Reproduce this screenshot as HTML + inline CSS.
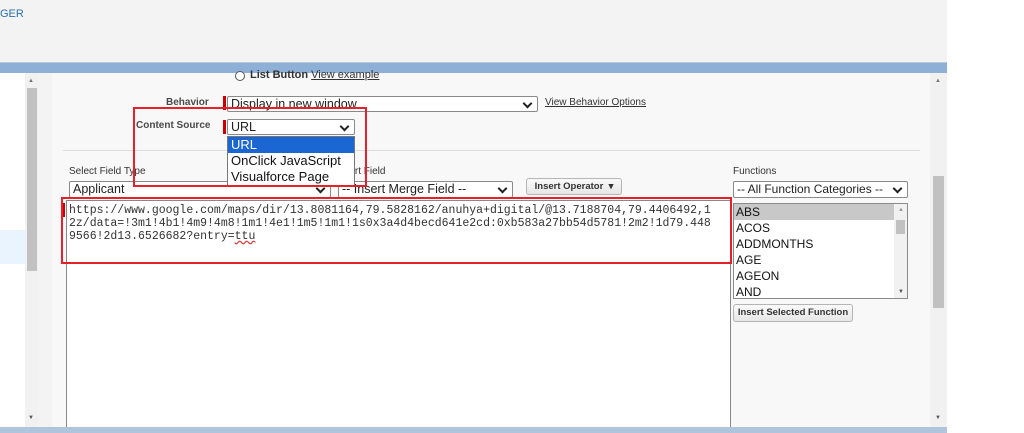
<!DOCTYPE html>
<html><head><style>
*{margin:0;padding:0;box-sizing:border-box}
body{width:1024px;height:433px;overflow:hidden;background:#fff;font-family:"Liberation Sans",Arial,sans-serif;position:relative}
.a{position:absolute}
.sel{position:absolute;background:#fff;border:1px solid #8a8a8a;border-radius:2px;font-size:12.5px;color:#222;padding-left:3px;line-height:15px;white-space:nowrap;overflow:hidden}
.sel:after{content:"";position:absolute;right:6px;top:3px;width:5px;height:5px;border-right:2px solid #222;border-bottom:2px solid #222;transform:rotate(45deg);background:#fff}
.lbl{position:absolute;font-size:10px;font-weight:bold;color:#4a4a4a}
.req{position:absolute;width:3px;background:#c00}
.btn{position:absolute;background:linear-gradient(#fafafa,#e6e6e6);border:1px solid #b5b5b5;border-radius:3px;font-size:9.5px;font-weight:bold;color:#333;text-align:center}
</style></head><body>
<div class="a" style="left:0;top:0;width:947px;height:62px;background:#f3f3f3"></div>
<div class="a" style="left:0;top:8px;font-size:11px;color:#2a6fb0">GER</div>
<div class="a" style="left:0;top:62px;width:947px;height:11px;background:#8eafd6;border-top:1px solid #b8c8dc"></div>
<div class="a" style="left:0;top:73px;width:25px;height:354px;background:#fff"></div>
<div class="a" style="left:0;top:230px;width:25px;height:34px;background:#eaf4fe"></div>
<div class="a" style="left:25px;top:73px;width:13px;height:354px;background:#f1f1f1"></div>
<div class="a" style="left:27px;top:88px;width:10px;height:183px;background:#c1c1c1"></div>
<div class="a" style="left:28px;top:78px;font-size:6px;color:#777">▲</div>
<div class="a" style="left:28px;top:415px;font-size:6px;color:#555">▼</div>
<div class="a" style="left:38px;top:73px;width:14px;height:354px;background:#f3f3f3"></div>
<div class="a" style="left:52px;top:73px;width:878px;height:354px;background:#f8f8f8"></div>
<div class="a" style="left:930px;top:73px;width:17px;height:354px;background:#f1f1f1"></div>
<div class="a" style="left:933px;top:176px;width:11px;height:132px;background:#c1c1c1"></div>
<div class="a" style="left:935px;top:78px;font-size:6px;color:#777">▲</div>
<div class="a" style="left:935px;top:415px;font-size:6px;color:#555">▼</div>
<div class="a" style="left:0;top:427px;width:947px;height:6px;background:#b0c4de"></div>

<div class="a" style="left:235px;top:71px;width:10px;height:10px;border:1px solid #555;border-radius:50%;background:#fff"></div>
<div class="a" style="left:250px;top:69px;font-size:11px;font-weight:bold;color:#333">List Button <span style="font-weight:normal;text-decoration:underline">View example</span></div>

<div class="lbl" style="left:166px;top:97px">Behavior</div>
<div class="req" style="left:223px;top:96px;height:14px"></div>
<div class="sel" style="left:227px;top:96px;width:311px;height:16px">Display in new window</div>
<div class="a" style="left:545px;top:97px;font-size:10px;color:#333;text-decoration:underline">View Behavior Options</div>

<div class="lbl" style="left:136px;top:120px">Content Source</div>
<div class="req" style="left:223px;top:120px;height:14px"></div>
<div class="sel" style="left:227px;top:119px;width:128px;height:16px">URL</div>

<div class="a" style="left:63px;top:150px;width:857px;height:1px;background:#ddd"></div>

<div class="a" style="left:69px;top:166px;font-size:10px;color:#333">Select Field Type</div>
<div class="sel" style="left:69px;top:181px;width:262px;height:17px">Applicant</div>
<div class="a" style="left:336px;top:166px;font-size:10px;color:#333">Insert Field</div>
<div class="sel" style="left:338px;top:181px;width:175px;height:17px">-- Insert Merge Field --</div>
<div class="btn" style="left:526px;top:178px;width:96px;height:17px;line-height:15px">Insert Operator &nbsp;▾</div>

<div class="a" style="left:733px;top:166px;font-size:10px;color:#333">Functions</div>
<div class="sel" style="left:733px;top:181px;width:175px;height:17px;font-size:12px">-- All Function Categories --</div>
<div class="a" style="left:733px;top:203px;width:175px;height:96px;background:#fff;border:1px solid #8a8a8a;font-size:12px;color:#111;line-height:16px;overflow:hidden">
<div style="background:#c8c8c8;width:160px;padding-left:2px">ABS</div>
<div style="padding-left:2px">ACOS</div><div style="padding-left:2px">ADDMONTHS</div><div style="padding-left:2px">AGE</div><div style="padding-left:2px">AGEON</div><div style="padding-left:2px">AND</div>
<div class="a" style="right:0;top:0;width:13px;height:94px;background:#f1f1f1"></div>
<div class="a" style="right:2px;top:16px;width:9px;height:14px;background:#c1c1c1"></div>
<div class="a" style="right:3px;top:2px;font-size:6px;line-height:8px;color:#999">▲</div>
<div class="a" style="right:3px;top:84px;font-size:6px;line-height:8px;color:#555">▼</div>
</div>
<div class="btn" style="left:733px;top:304px;width:120px;height:18px;line-height:16px">Insert Selected Function</div>

<div class="a" style="left:66px;top:200px;width:665px;height:227px;background:#fff;border:1px solid #888;border-bottom:none"></div>
<div class="req" style="left:62px;top:203px;height:14px"></div>
<div class="a" style="left:69px;top:204px;font-family:'Liberation Mono',monospace;font-size:11.5px;line-height:13px;color:#333;white-space:nowrap">https://www.google.com/maps/dir/13.8081164,79.5828162/anuhya+digital/@13.7188704,79.4406492,1<br>2z/data=!3m1!4b1!4m9!4m8!1m1!4e1!1m5!1m1!1s0x3a4d4becd641e2cd:0xb583a27bb54d5781!2m2!1d79.448<br>9566!2d13.6526682?entry=<span style="text-decoration:underline wavy #d33">ttu</span></div>

<div class="a" style="left:227px;top:136px;width:128px;height:50px;background:#fff;border:1px solid #777;font-size:13px;color:#111;line-height:16px">
<div style="background:#1a66d2;color:#fff;padding-left:3px">URL</div>
<div style="padding-left:3px">OnClick JavaScript</div>
<div style="padding-left:3px">Visualforce Page</div>
</div>

<div class="a" style="left:133px;top:107px;width:234px;height:80px;border:2px solid #e8202a"></div>
<div class="a" style="left:61px;top:197px;width:671px;height:67px;border:2px solid #e8202a"></div>
</body></html>
